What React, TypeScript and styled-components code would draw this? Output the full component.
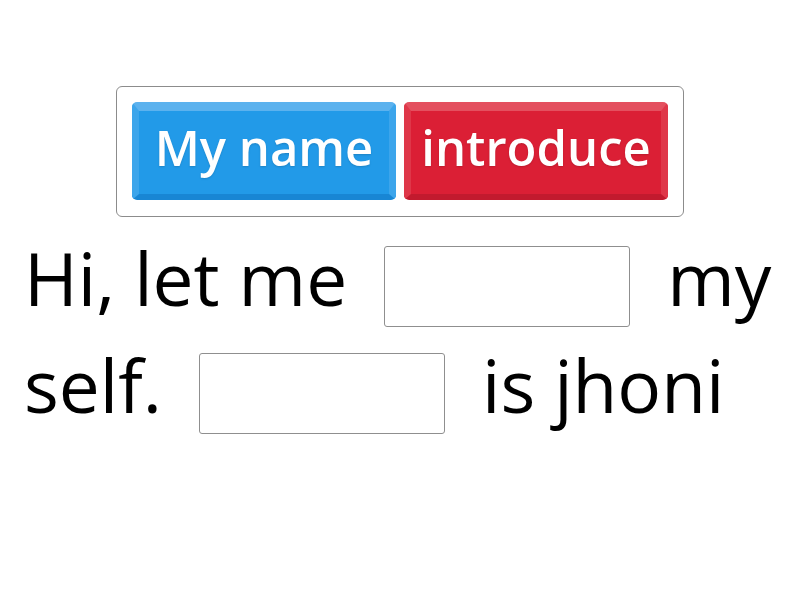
import React from "react";
import styled, { createGlobalStyle } from "styled-components";

const GlobalStyle = createGlobalStyle`
  html, body {
    margin: 0;
    padding: 0;
    background: #fff;
  }
  body {
    font-family: "Open Sans", "Noto Sans", sans-serif;
    color: #000;
  }
`;

type Tone = "blue" | "red";

const palette: Record<
  Tone,
  { face: string; top: string; side: string; bottom: string }
> = {
  blue: { face: "#229ae8", top: "#5cb2ee", side: "#3ca5eb", bottom: "#1886d4" },
  red: { face: "#db1f35", top: "#e4505f", side: "#df3749", bottom: "#c21a2e" },
};

const Page = styled.div`
  width: 800px;
  height: 600px;
  padding-top: 86px;
  box-sizing: border-box;
`;

const TileTray = styled.div`
  width: 568px;
  height: 131px;
  margin: 0 auto;
  box-sizing: border-box;
  border: 1px solid #8c8c8c;
  border-radius: 6px;
  padding: 15px;
  display: flex;
  gap: 8px;
`;

const Tile = styled.div<{ $tone: Tone }>`
  width: 264px;
  height: 98px;
  box-sizing: border-box;
  display: flex;
  align-items: center;
  justify-content: center;
  background: ${({ $tone }) => palette[$tone].face};
  border-style: solid;
  border-width: 9px 7px 6px 7px;
  border-color: ${({ $tone }) =>
    `${palette[$tone].top} ${palette[$tone].side} ${palette[$tone].bottom} ${palette[$tone].side}`};
  border-radius: 5px;
  color: #fff;
  font-size: 49px;
  font-weight: 600;
  line-height: 1;
  padding-bottom: 10px;
  white-space: nowrap;
  text-shadow: 0 1px 2px rgba(0, 0, 0, 0.15);
`;

const Sentence = styled.div`
  margin-top: 7px;
  padding: 0 24px;
  display: flex;
  flex-wrap: wrap;
  align-items: flex-start;
  column-gap: 19px;
  font-size: 73px;
  line-height: 107px;
`;

const Word = styled.span`
  white-space: nowrap;
`;

const Blank = styled.div`
  width: 246px;
  height: 81px;
  margin: 22px 18px 0;
  box-sizing: border-box;
  border: 1px solid #8f8f8f;
  border-radius: 3px;
  background: #fff;
`;

type Part = { kind: "word"; text: string } | { kind: "blank" };

const parts: Part[] = [
  { kind: "word", text: "Hi," },
  { kind: "word", text: "let" },
  { kind: "word", text: "me" },
  { kind: "blank" },
  { kind: "word", text: "my" },
  { kind: "word", text: "self." },
  { kind: "blank" },
  { kind: "word", text: "is" },
  { kind: "word", text: "jhoni" },
];

export default function App() {
  return (
    <Page>
      <GlobalStyle />
      <TileTray>
        <Tile $tone="blue">My name</Tile>
        <Tile $tone="red">introduce</Tile>
      </TileTray>
      <Sentence>
        {parts.map((p, i) =>
          p.kind === "word" ? <Word key={i}>{p.text}</Word> : <Blank key={i} />
        )}
      </Sentence>
    </Page>
  );
}
